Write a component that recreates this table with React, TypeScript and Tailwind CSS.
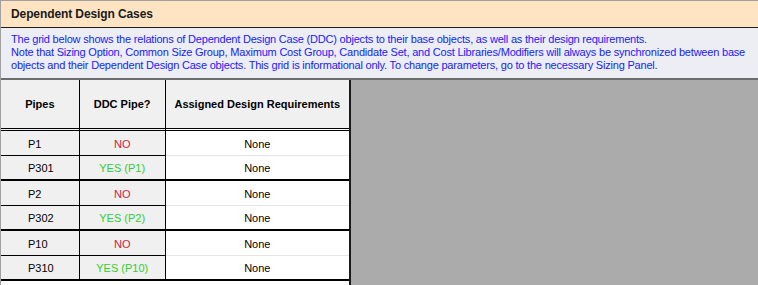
import React from "react";

type Row = { pipe: string; ddc: string; base?: string; req: string };

const groups: Row[][] = [
  [
    { pipe: "P1", ddc: "NO", req: "None" },
    { pipe: "P301", ddc: "YES (P1)", base: "P1", req: "None" },
  ],
  [
    { pipe: "P2", ddc: "NO", req: "None" },
    { pipe: "P302", ddc: "YES (P2)", base: "P2", req: "None" },
  ],
  [
    { pipe: "P10", ddc: "NO", req: "None" },
    { pipe: "P310", ddc: "YES (P10)", base: "P10", req: "None" },
  ],
];

const GridRow = ({ row, last }: { row: Row; last: boolean }) => (
  <div className={`flex h-[25px] ${last ? "border-b-2 border-black" : ""}`}>
    <div
      className={`w-[79px] flex items-center pl-[27px] pt-[2px] bg-[#f0f0f0] border-r border-black ${
        last ? "" : "border-b border-black"
      }`}
    >
      {row.pipe}
    </div>
    <div
      className={`w-[86px] flex items-center justify-center pt-[2px] bg-[#f0f0f0] border-r border-black ${
        row.base ? "text-[#32cd32]" : "text-[#d42038]"
      } ${last ? "" : "border-b border-black"}`}
    >
      {row.ddc}
    </div>
    <div
      className={`w-[184px] flex items-center justify-center pt-[2px] bg-white ${
        last ? "" : "border-b border-[#e6e6e6]"
      }`}
    >
      {row.req}
    </div>
  </div>
);

export default function App() {
  return (
    <div className="w-[758px] h-[285px] overflow-hidden flex flex-col bg-[#ababab] border-l border-t border-[#a0a0a0] font-['Liberation_Sans',Arial,sans-serif] text-[11px] text-black">
      {/* title bar */}
      <div className="h-[27px] shrink-0 bg-[#ffe4c4] border-b border-[#1e1e1e] pl-[10px] flex items-center">
        <span className="font-bold text-[12px] text-[#1a1a1a] tracking-[-0.1px]">
          Dependent Design Cases
        </span>
      </div>

      {/* description */}
      <div className="h-[52px] shrink-0 bg-[#eceef4] border-b-2 border-[#6d6d6d] pl-[10px] pt-[5px] text-[#1a1aff] leading-[13px] tracking-[-0.2px] whitespace-nowrap">
        <div>
          The grid below shows the relations of Dependent Design Case (DDC) objects to their base
          objects, as well as their design requirements.
        </div>
        <div>
          Note that Sizing Option, Common Size Group, Maximum Cost Group, Candidate Set, and Cost
          Libraries/Modifiers will always be synchronized between base
        </div>
        <div>
          objects and their Dependent Design Case objects. This grid is informational only. To
          change parameters, go to the necessary Sizing Panel.
        </div>
      </div>

      {/* grid + empty area */}
      <div className="flex flex-1">
        <div className="w-[350px] shrink-0 border-r-2 border-[#1a1a1a] bg-white">
          <div className="h-[49px] flex bg-[#f0f0f0] font-bold border-b border-black">
            <div className="w-[79px] flex items-center justify-center border-r border-black">
              Pipes
            </div>
            <div className="w-[86px] flex items-center justify-center border-r border-black">
              DDC Pipe?
            </div>
            <div className="w-[184px] flex items-center justify-center">
              Assigned Design Requirements
            </div>
          </div>
          <div className="h-[1px] flex">
            <div className="w-[79px] bg-[#f0f0f0] border-r border-black" />
            <div className="w-[86px] bg-[#f0f0f0] border-r border-black" />
            <div className="flex-1 bg-white" />
          </div>
          <div className="border-t border-black">
            {groups.map((g, gi) => (
              <div key={gi}>
                {g.map((r, ri) => (
                  <GridRow key={r.pipe} row={r} last={ri === g.length - 1} />
                ))}
              </div>
            ))}
          </div>
        </div>
        <div className="flex-1" />
      </div>
    </div>
  );
}
